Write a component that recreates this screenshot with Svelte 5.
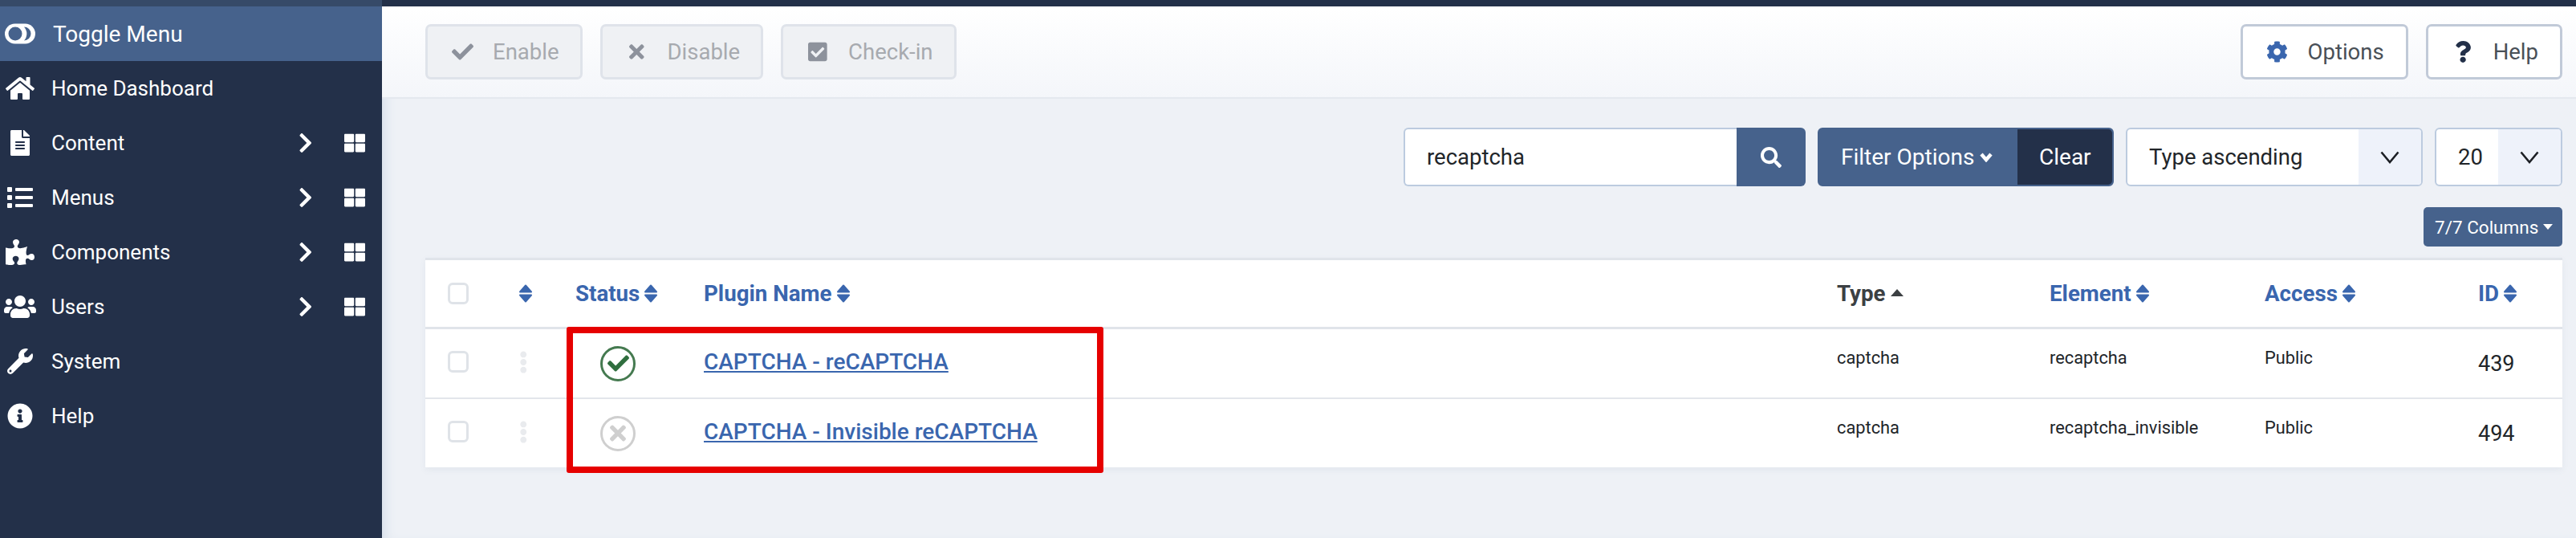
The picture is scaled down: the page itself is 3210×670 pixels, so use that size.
<script>
  // icon paths, [viewBox width, d], all 512 high
  const icons = {
    home: [576, 'M280.37 148.26L96 300.11V464a16 16 0 0 0 16 16l112.06-.29a16 16 0 0 0 15.92-16V368a16 16 0 0 1 16-16h64a16 16 0 0 1 16 16v95.64a16 16 0 0 0 16 16.05L464 480a16 16 0 0 0 16-16V300L295.67 148.26a12.19 12.19 0 0 0-15.3 0zM571.6 251.47L488 182.56V44.05a12 12 0 0 0-12-12h-56a12 12 0 0 0-12 12v72.61L318.47 43a48 48 0 0 0-61 0L4.34 251.47a12 12 0 0 0-1.6 16.9l25.5 31A12 12 0 0 0 45.15 301l235.22-193.74a12.19 12.19 0 0 1 15.3 0L530.9 301a12 12 0 0 0 16.9-1.6l25.5-31a12 12 0 0 0-1.7-16.93z'],
    file: [384, 'M224 136V0H24C10.7 0 0 10.7 0 24v464c0 13.3 10.7 24 24 24h336c13.3 0 24-10.7 24-24V160H248c-13.2 0-24-10.8-24-24zm64 236c0 6.6-5.4 12-12 12H108c-6.6 0-12-5.4-12-12v-8c0-6.6 5.4-12 12-12h168c6.6 0 12 5.4 12 12v8zm0-64c0 6.6-5.4 12-12 12H108c-6.6 0-12-5.4-12-12v-8c0-6.6 5.4-12 12-12h168c6.6 0 12 5.4 12 12v8zm0-72v8c0 6.6-5.4 12-12 12H108c-6.6 0-12-5.4-12-12v-8c0-6.6 5.4-12 12-12h168c6.6 0 12 5.4 12 12zm96-114.1v6.1H256V0h6.1c6.4 0 12.5 2.5 17 7l97.9 98c4.5 4.5 7 10.6 7 16.9z'],
    list: [512, 'M80 368H16a16 16 0 0 0-16 16v64a16 16 0 0 0 16 16h64a16 16 0 0 0 16-16v-64a16 16 0 0 0-16-16zm0-320H16A16 16 0 0 0 0 64v64a16 16 0 0 0 16 16h64a16 16 0 0 0 16-16V64a16 16 0 0 0-16-16zm0 160H16a16 16 0 0 0-16 16v64a16 16 0 0 0 16 16h64a16 16 0 0 0 16-16v-64a16 16 0 0 0-16-16zm416 176H176a16 16 0 0 0-16 16v32a16 16 0 0 0 16 16h320a16 16 0 0 0 16-16v-32a16 16 0 0 0-16-16zm0-320H176a16 16 0 0 0-16 16v32a16 16 0 0 0 16 16h320a16 16 0 0 0 16-16V80a16 16 0 0 0-16-16zm0 160H176a16 16 0 0 0-16 16v32a16 16 0 0 0 16 16h320a16 16 0 0 0 16-16v-32a16 16 0 0 0-16-16z'],
    puzzle: [576, 'M519.442 288.651c-41.519 0-59.5 31.593-82.058 31.593C377.409 320.244 432 144 432 144s-196.288 80-196.288-3.297c0-35.827 36.288-46.25 36.288-85.985C272 19.216 243.885 0 210.539 0c-34.654 0-66.366 18.891-66.366 56.346 0 41.364 31.711 59.277 31.711 81.75C175.885 207.719 0 166.758 0 166.758v333.237s178.635 41.047 178.635-28.662c0-22.473-40-40.107-40-81.471 0-37.456 29.25-56.346 63.577-56.346 33.673 0 61.788 19.216 61.788 54.717 0 39.735-36.288 50.158-36.288 85.985 0 60.803 129.675 25.73 181.23 25.73 0 0-34.725-120.101 25.827-120.101 35.962 0 46.423 36.152 86.308 36.152C556.712 416 576 387.99 576 354.443c0-34.199-18.962-65.792-56.558-65.792z'],
    users: [640, 'M96 224c35.3 0 64-28.7 64-64s-28.7-64-64-64-64 28.7-64 64 28.7 64 64 64zm448 0c35.3 0 64-28.7 64-64s-28.7-64-64-64-64 28.7-64 64 28.7 64 64 64zm32 32h-64c-17.6 0-33.5 7.1-45.1 18.6 40.3 22.1 68.9 62 75.1 109.4h66c17.7 0 32-14.3 32-32v-32c0-35.3-28.7-64-64-64zm-256 0c61.9 0 112-50.1 112-112S381.9 32 320 32 208 82.1 208 144s50.1 112 112 112zm76.8 32h-8.3c-20.8 10-43.9 16-68.5 16s-47.6-6-68.5-16h-8.3C179.6 288 128 339.6 128 403.2V432c0 26.5 21.5 48 48 48h288c26.5 0 48-21.5 48-48v-28.8c0-63.6-51.6-115.2-115.2-115.2zm-223.7-13.4C161.5 263.1 145.6 256 128 256H64c-35.3 0-64 28.7-64 64v32c0 17.7 14.3 32 32 32h65.9c6.3-47.4 34.9-87.3 75.2-109.4z'],
    wrench: [512, 'M507.73 109.1c-2.24-9.03-13.54-12.09-20.12-5.51l-74.36 74.36-67.88-11.31-11.31-67.88 74.36-74.36c6.62-6.62 3.43-17.9-5.66-20.16-47.38-11.74-99.55.91-136.58 37.93-39.64 39.64-50.55 97.1-34.05 147.2L18.74 402.76c-24.99 24.99-24.99 65.51 0 90.5 24.99 24.99 65.51 24.99 90.5 0l213.21-213.21c50.12 16.71 107.47 5.68 147.37-34.22 37.07-37.07 49.7-89.32 37.91-136.73zM64 472c-13.25 0-24-10.75-24-24 0-13.26 10.75-24 24-24s24 10.74 24 24c0 13.25-10.75 24-24 24z'],
    info: [512, 'M256 8C119.043 8 8 119.083 8 256c0 136.997 111.043 248 248 248s248-111.003 248-248C504 119.083 392.957 8 256 8zm0 110c23.196 0 42 18.804 42 42s-18.804 42-42 42-42-18.804-42-42 18.804-42 42-42zm56 254c0 6.627-5.373 12-12 12h-88c-6.627 0-12-5.373-12-12v-24c0-6.627 5.373-12 12-12h12v-64h-12c-6.627 0-12-5.373-12-12v-24c0-6.627 5.373-12 12-12h64c6.627 0 12 5.373 12 12v100h12c6.627 0 12 5.373 12 12v24z'],
    check: [512, 'M173.898 439.404l-166.4-166.4c-9.997-9.997-9.997-26.206 0-36.204l36.203-36.204c9.997-9.998 26.207-9.998 36.204 0L192 312.69 432.095 72.596c9.997-9.997 26.207-9.997 36.204 0l36.203 36.204c9.997 9.997 9.997 26.206 0 36.204l-294.4 294.401c-9.998 9.997-26.207 9.997-36.204-.001z'],
    times: [352, 'M242.72 256l100.07-100.07c12.28-12.28 12.28-32.19 0-44.48l-22.24-22.24c-12.28-12.28-32.19-12.28-44.48 0L176 189.28 75.93 89.21c-12.28-12.28-32.19-12.28-44.48 0L9.21 111.45c-12.28 12.28-12.28 32.19 0 44.48L109.28 256 9.21 356.07c-12.28 12.28-12.28 32.19 0 44.48l22.24 22.24c12.28 12.28 32.2 12.28 44.48 0L176 322.72l100.07 100.07c12.28 12.28 32.2 12.28 44.48 0l22.24-22.24c12.28-12.28 12.28-32.19 0-44.48L242.72 256z'],
    checkSquare: [448, 'M400 480H48c-26.51 0-48-21.49-48-48V80c0-26.51 21.49-48 48-48h352c26.51 0 48 21.49 48 48v352c0 26.51-21.49 48-48 48zm-204.686-98.059l184-184c6.248-6.248 6.248-16.379 0-22.627l-22.627-22.627c-6.248-6.248-16.379-6.249-22.628 0L184 302.745l-70.059-70.059c-6.248-6.248-16.379-6.248-22.628 0l-22.627 22.627c-6.248 6.248-6.248 16.379 0 22.627l104 104c6.249 6.25 16.379 6.25 22.628.001z'],
    cog: [512, 'M487.4 315.7l-42.6-24.6c4.3-23.2 4.3-47 0-70.2l42.6-24.6c4.9-2.8 7.1-8.6 5.5-14-11.1-35.6-30-67.8-54.7-94.6-3.8-4.1-10-5.1-14.8-2.3L380.8 110c-17.9-15.4-38.5-27.3-60.8-35.1V25.8c0-5.6-3.9-10.5-9.4-11.7-36.7-8.2-74.3-7.8-109.2 0-5.5 1.2-9.4 6.1-9.4 11.7V75c-22.2 7.9-42.8 19.8-60.8 35.1L88.7 85.5c-4.9-2.8-11-1.9-14.8 2.3-24.7 26.7-43.6 58.9-54.7 94.6-1.7 5.4.6 11.2 5.5 14L67.3 221c-4.3 23.2-4.3 47 0 70.2l-42.6 24.6c-4.9 2.8-7.1 8.6-5.5 14 11.1 35.6 30 67.8 54.7 94.6 3.8 4.1 10 5.1 14.8 2.3l42.6-24.6c17.9 15.4 38.5 27.3 60.8 35.1v49.2c0 5.6 3.9 10.5 9.4 11.7 36.7 8.2 74.3 7.8 109.2 0 5.5-1.2 9.4-6.1 9.4-11.7v-49.2c22.2-7.9 42.8-19.8 60.8-35.1l42.6 24.6c4.9 2.8 11 1.9 14.8-2.3 24.7-26.7 43.6-58.9 54.7-94.6 1.5-5.5-.7-11.3-5.6-14.1zM256 336c-44.1 0-80-35.9-80-80s35.9-80 80-80 80 35.9 80 80-35.9 80-80 80z'],
    question: [384, 'M202.021 0C122.202 0 70.503 32.703 29.914 91.026c-7.363 10.58-5.093 25.086 5.178 32.874l43.138 32.709c10.373 7.865 25.132 6.026 33.253-4.148 25.049-31.381 43.63-49.449 82.757-49.449 30.764 0 68.816 19.799 68.816 49.631 0 22.552-18.617 34.134-48.993 51.164-35.423 19.86-82.299 44.576-82.299 106.405V320c0 13.255 10.745 24 24 24h72.471c13.255 0 24-10.745 24-24v-5.773c0-42.86 125.268-44.645 125.268-160.627C377.504 66.256 286.902 0 202.021 0zM192 373.459c-38.196 0-69.271 31.075-69.271 69.271 0 38.195 31.075 69.27 69.271 69.27s69.271-31.075 69.271-69.271-31.075-69.27-69.271-69.27z'],
    search: [512, 'M505 442.7L405.3 343c-4.5-4.5-10.6-7-17-7H372c27.6-35.3 44-79.7 44-128C416 93.1 322.9 0 208 0S0 93.1 0 208s93.1 208 208 208c48.3 0 92.7-16.4 128-44v16.3c0 6.4 2.5 12.5 7 17l99.7 99.7c9.4 9.4 24.6 9.4 33.9 0l28.3-28.3c9.4-9.4 9.4-24.6.1-34zM208 336c-70.7 0-128-57.2-128-128 0-70.7 57.2-128 128-128 70.7 0 128 57.2 128 128 0 70.7-57.2 128-128 128z'],
    chevron: [320, 'M285.476 272.971L91.132 467.314c-9.373 9.373-24.569 9.373-33.941 0l-22.667-22.667c-9.357-9.357-9.375-24.522-.04-33.901L188.505 256 34.484 101.255c-9.335-9.379-9.317-24.544.04-33.901l22.667-22.667c9.373-9.373 24.569-9.373 33.941 0L285.475 239.03c9.373 9.372 9.373 24.568.001 33.941z'],
    grid: [512, 'M296 32h192c13.255 0 24 10.745 24 24v160c0 13.255-10.745 24-24 24H296c-13.255 0-24-10.745-24-24V56c0-13.255 10.745-24 24-24zm-80 0H24C10.745 32 0 42.745 0 56v160c0 13.255 10.745 24 24 24h192c13.255 0 24-10.745 24-24V56c0-13.255-10.745-24-24-24zM0 296v160c0 13.255 10.745 24 24 24h192c13.255 0 24-10.745 24-24V296c0-13.255-10.745-24-24-24H24c-13.255 0-24 10.745-24 24zm296 184h192c13.255 0 24-10.745 24-24V296c0-13.255-10.745-24-24-24H296c-13.255 0-24 10.745-24 24v160c0 13.255 10.745 24 24 24z'],
    dots: [192, 'M96 184c39.8 0 72 32.2 72 72s-32.2 72-72 72-72-32.2-72-72 32.2-72 72-72zM24 80c0 39.8 32.2 72 72 72s72-32.2 72-72S135.8 8 96 8 24 40.2 24 80zm0 352c0 39.8 32.2 72 72 72s72-32.2 72-72-32.2-72-72-72-72 32.2-72 72z']
  };

  const menu = [
    { label: 'Home Dashboard', icon: 'home' },
    { label: 'Content', icon: 'file', sub: true },
    { label: 'Menus', icon: 'list', sub: true },
    { label: 'Components', icon: 'puzzle', sub: true },
    { label: 'Users', icon: 'users', sub: true },
    { label: 'System', icon: 'wrench' },
    { label: 'Help', icon: 'info' }
  ];

  const actions = [
    { label: 'Enable', icon: 'check' },
    { label: 'Disable', icon: 'times' },
    { label: 'Check-in', icon: 'checkSquare' }
  ];

  const rows = [
    { name: 'CAPTCHA - reCAPTCHA', on: true, element: 'recaptcha', id: 439 },
    { name: 'CAPTCHA - Invisible reCAPTCHA', on: false, element: 'recaptcha_invisible', id: 494 }
  ];
</script>

{#snippet icon(name, size, cls = '')}
  <svg class={cls} width={size * icons[name][0] / 512} height={size} viewBox="0 0 {icons[name][0]} 512" fill="currentColor">
    <path d={icons[name][1]} />
  </svg>
{/snippet}

{#snippet sort()}
  <svg class="sort" width="16" height="23" viewBox="0 0 16 23" fill="currentColor" stroke="currentColor" stroke-width="2" stroke-linejoin="round">
    <path d="M8 1.5 L15 9.5 H1 Z" />
    <path d="M8 21.5 L15 13.5 H1 Z" />
  </svg>
{/snippet}

{#snippet arrow()}
  <svg width="24" height="16" viewBox="0 0 24 16" fill="none" stroke="#1c1f24" stroke-width="2.6">
    <path d="M1.5 1.5 L12 14 L22.5 1.5" />
  </svg>
{/snippet}

<div class="page">
  <aside class="sidebar">
    <div class="toggle">
      <span class="ico">
        <svg width="38" height="26" viewBox="0 0 38 26">
          <rect width="38" height="25" y="0.5" rx="12.5" fill="#fff" />
          <circle cx="13" cy="13" r="8.5" fill="#46628c" />
          <path d="M24 4.5 a8.5 8.5 0 1 1 0 17 a12.5 12.5 0 0 0 0 -17z" fill="#46628c" />
        </svg>
      </span>
      <span>Toggle Menu</span>
    </div>
    {#each menu as item}
      <div class="item">
        <span class="ico">{@render icon(item.icon, 32)}</span>
        <span class="label">{item.label}</span>
        {#if item.sub}
          <span class="chev">{@render icon('chevron', 28)}</span>
          <span class="dash">{@render icon('grid', 26)}</span>
        {/if}
      </div>
    {/each}
  </aside>

  <main class="main">
    <div class="toolbar">
      {#each actions as a}
        <button class="btn disabled"><span class="bico">{@render icon(a.icon, 27)}</span>{a.label}</button>
      {/each}
      <div class="spacer"></div>
      <button class="btn light"><span class="bico cog">{@render icon('cog', 27)}</span>Options</button>
      <button class="btn light"><span class="bico quest">{@render icon('question', 27)}</span>Help</button>
    </div>

    <div class="content">
      <div class="filters">
        <div class="search">
          <div class="input">recaptcha</div>
          <span class="search-btn">{@render icon('search', 26)}</span>
        </div>
        <div class="filter-group">
          <span class="filter-btn">Filter Options
            <svg width="16" height="12" viewBox="0 0 16 12" fill="none" stroke="#fff" stroke-width="4.4"><path d="M2 2 L8 9 L14 2" /></svg>
          </span>
          <span class="clear">Clear</span>
        </div>
        <div class="select order"><span class="val">Type ascending</span><span class="sel-arrow">{@render arrow()}</span></div>
        <div class="select limit"><span class="val">20</span><span class="sel-arrow">{@render arrow()}</span></div>
      </div>

      <div class="columns-row">
        <span class="columns">7/7 Columns<i class="caret"></i></span>
      </div>

      <div class="table">
        <div class="row head">
          <span class="box"></span>
          <span class="th">{@render sort()}</span>
          <span class="th">Status {@render sort()}</span>
          <span class="th">Plugin Name {@render sort()}</span>
          <span class="th active">Type <i class="up"></i></span>
          <span class="th">Element {@render sort()}</span>
          <span class="th">Access {@render sort()}</span>
          <span class="th">ID {@render sort()}</span>
        </div>
        {#each rows as r}
          <div class="row body">
            <span class="box"></span>
            <span class="drag">{@render icon('dots', 28)}</span>
            <span class="status" class:on={r.on}>{@render icon(r.on ? 'check' : 'times', r.on ? 27 : 29)}</span>
            <a class="name" href="#top">{r.name}</a>
            <span class="small">captcha</span>
            <span class="small">{r.element}</span>
            <span class="small">Public</span>
            <span class="num">{r.id}</span>
          </div>
        {/each}
        <div class="mark"></div>
      </div>
    </div>
  </main>
</div>

<style>
  :global(body) {
    margin: 0;
    background: #eef1f6;
  }

  .page {
    display: grid;
    grid-template-columns: 476px 1fr;
    height: 670px;
    overflow: hidden;
    font-family: Roboto, "Liberation Sans", sans-serif;
    font-size: 27.5px;
  }

  svg {
    display: block;
  }

  /* Sidebar */
  .sidebar {
    background: #233049;
    border-top: 8px solid #364a68;
    color: #fff;
  }

  .toggle,
  .item {
    display: flex;
    align-items: center;
    height: 68px;
  }

  .toggle {
    background: #46628c;
    font-size: 28px;
  }

  .item {
    font-size: 26px;
  }

  .ico {
    width: 50px;
    margin-right: 14px;
    display: flex;
    justify-content: center;
  }

  .toggle .ico {
    margin-right: 16px;
  }

  .label {
    flex: 1;
  }

  .chev {
    width: 18px;
    margin-right: 39px;
  }

  .dash {
    margin-right: 21px;
  }

  /* Toolbar */
  .main {
    border-top: 8px solid #233049;
    box-shadow: inset 12px 0 14px -8px #d5deea;
    min-width: 0;
  }

  .toolbar {
    display: flex;
    gap: 22px;
    height: 115px;
    box-sizing: border-box;
    padding: 22px 17px 0 54px;
    background: linear-gradient(#fff, #f4f6fa);
    border-bottom: 2px solid #e4e8ef;
  }

  .spacer {
    flex: 1;
  }

  .btn {
    display: flex;
    align-items: center;
    height: 69px;
    padding: 0 27px;
    border: 3px solid;
    border-radius: 7px;
    font: inherit;
  }

  .bico {
    width: 32px;
    margin-right: 22px;
    display: flex;
    justify-content: center;
  }

  .disabled {
    padding-right: 26px;
    background: #eff1f4;
    border-color: #dfe3ea;
    color: #a7aaaf;
  }

  .disabled .bico {
    color: #8d929c;
  }

  .light {
    background: #fff;
    border-color: #c1cad8;
    color: #495057;
  }

  .cog {
    color: #3a66ae;
  }

  .quest {
    color: #233049;
  }

  /* Filter bar */
  .content {
    padding: 36px 17px 0 54px;
  }

  .filters {
    display: flex;
    justify-content: flex-end;
    gap: 15px;
    height: 73px;
  }

  .search {
    display: flex;
    width: 501px;
  }

  .input {
    flex: 1;
    display: flex;
    align-items: center;
    padding-left: 27px;
    background: #fff;
    border: 2px solid #bccbdf;
    border-right: 0;
    border-radius: 6px 0 0 6px;
    color: #212529;
  }

  .search-btn {
    width: 86px;
    display: flex;
    align-items: center;
    justify-content: center;
    background: #46628c;
    color: #fff;
    border-radius: 0 6px 6px 0;
  }

  .filter-group {
    display: flex;
    width: 369px;
    box-sizing: border-box;
    border: 2px solid #46628c;
    border-radius: 6px;
    background: #46628c;
    color: #fff;
    font-size: 28px;
  }

  .filter-btn {
    width: 247px;
    box-sizing: border-box;
    padding-left: 27px;
    display: flex;
    align-items: center;
    gap: 7px;
  }

  .clear {
    flex: 1;
    display: flex;
    align-items: center;
    padding-left: 27px;
    background: #233049;
    border-radius: 0 5px 5px 0;
  }

  .select {
    display: flex;
    box-sizing: border-box;
    background: #fff;
    border: 2px solid #bccbdf;
    border-radius: 6px;
    color: #212529;
    overflow: hidden;
  }

  .order {
    width: 370px;
  }

  .limit {
    width: 159px;
  }

  .val {
    flex: 1;
    display: flex;
    align-items: center;
    padding-left: 27px;
  }

  .sel-arrow {
    width: 78px;
    display: flex;
    align-items: center;
    justify-content: center;
    background: #eef2fa;
  }

  .columns-row {
    display: flex;
    justify-content: flex-end;
    margin-top: 26px;
  }

  .columns {
    display: flex;
    align-items: center;
    height: 49px;
    width: 173px;
    box-sizing: border-box;
    padding-left: 14px;
    background: #46628c;
    color: #fff;
    font-size: 22.5px;
    border-radius: 5px;
  }

  .caret {
    margin-left: 6px;
    border: 6px solid transparent;
    border-top: 7px solid #fff;
    border-bottom: 0;
  }

  /* Table */
  .table {
    position: relative;
    margin-top: 14px;
    background: #fff;
    border-top: 3px solid #e0e4ea;
    box-shadow: 0 3px 8px rgba(90, 110, 140, 0.08);
  }

  .row {
    display: grid;
    grid-template-columns: 89px 70px 160px 1412px 265px 268px 266px 1fr;
    align-items: center;
    padding-left: 28px;
  }

  .head {
    height: 83px;
    border-bottom: 3px solid #e0e4ea;
    font-size: 27.7px;
  }

  .body {
    height: 85px;
  }

  .body + .body {
    border-top: 2px solid #e3e6eb;
  }

  .box {
    width: 26px;
    height: 27px;
    box-sizing: border-box;
    border: 3px solid #dfe3e8;
    border-radius: 6px;
  }

  .body .box {
    margin-top: -5px;
  }

  .th {
    display: flex;
    align-items: center;
    gap: 6px;
    font-weight: 700;
    color: #3a66ae;
    white-space: nowrap;
  }

  .th.active {
    color: #3c4043;
  }

  .up {
    border: 8px solid transparent;
    border-bottom: 9px solid #3c4043;
    border-top: 0;
    margin-top: -2px;
  }

  .drag {
    color: #e9ebee;
    margin-top: -4px;
  }

  .status {
    display: flex;
    align-items: center;
    justify-content: center;
    width: 44px;
    height: 44px;
    margin-left: 31px;
    box-sizing: border-box;
    border: 3px solid #cfcfcf;
    border-radius: 50%;
    color: #cfcfcf;
  }

  .status.on {
    border-color: #457a50;
    color: #2f6e3e;
  }

  .name {
    color: #3a66ae;
    font-size: 28px;
    font-weight: 500;
    margin-top: -5px;
    justify-self: start;
  }

  .small {
    font-size: 21.8px;
    color: #212529;
    padding-bottom: 14px;
  }

  .num {
    color: #212529;
    font-size: 27px;
  }

  /* Red annotation frame */
  .mark {
    position: absolute;
    left: 176px;
    top: 83px;
    width: 669px;
    height: 182px;
    box-sizing: border-box;
    border: 8px solid #e60000;
    border-radius: 3px;
  }
</style>
